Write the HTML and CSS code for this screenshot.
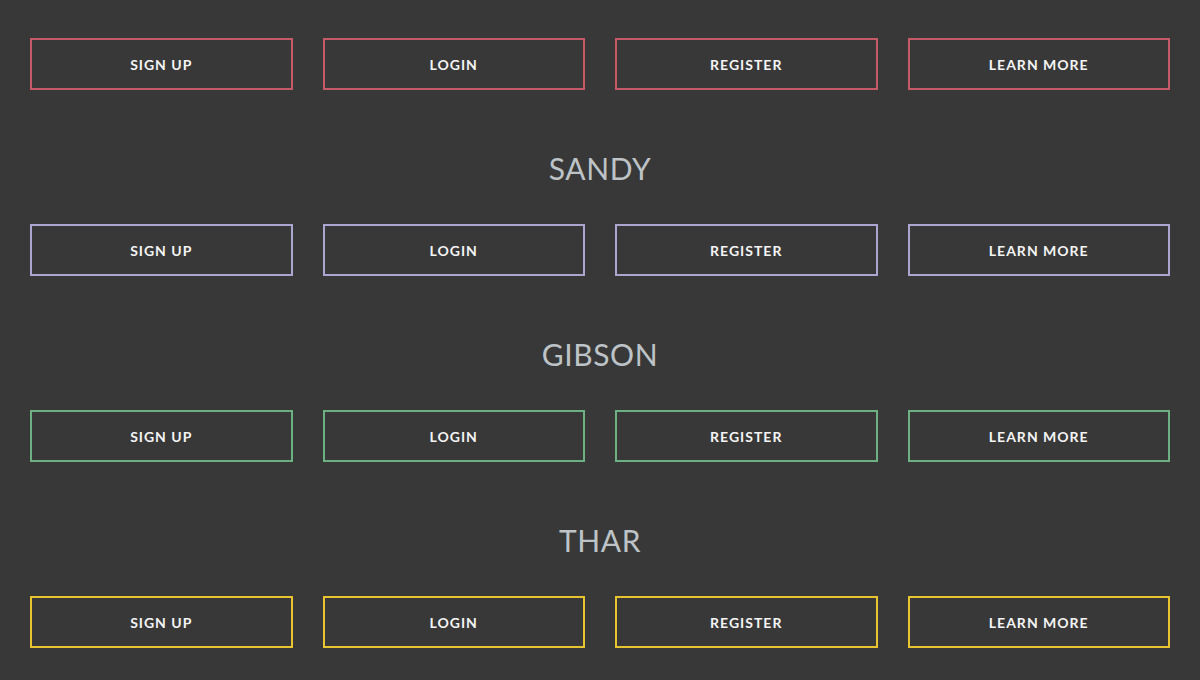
FILE: index.html
```html
<!DOCTYPE html>
<html>
<head>
<meta charset="utf-8">
<link rel="stylesheet" href="styles.css">
</head>
<body>
<main class="page">
  <section class="group group-first">
    <div class="row">
      <a class="btn btn-red">Sign up</a>
      <a class="btn btn-red">Login</a>
      <a class="btn btn-red">Register</a>
      <a class="btn btn-red">Learn more</a>
    </div>
  </section>
  <section class="group">
    <h2 class="title">Sandy</h2>
    <div class="row">
      <a class="btn btn-purple">Sign up</a>
      <a class="btn btn-purple">Login</a>
      <a class="btn btn-purple">Register</a>
      <a class="btn btn-purple">Learn more</a>
    </div>
  </section>
  <section class="group">
    <h2 class="title">Gibson</h2>
    <div class="row">
      <a class="btn btn-green">Sign up</a>
      <a class="btn btn-green">Login</a>
      <a class="btn btn-green">Register</a>
      <a class="btn btn-green">Learn more</a>
    </div>
  </section>
  <section class="group">
    <h2 class="title">Thar</h2>
    <div class="row">
      <a class="btn btn-yellow">Sign up</a>
      <a class="btn btn-yellow">Login</a>
      <a class="btn btn-yellow">Register</a>
      <a class="btn btn-yellow">Learn more</a>
    </div>
  </section>
</main>
</body>
</html>
```

FILE: styles.css
```css
* { box-sizing: border-box; }
html, body {
  margin: 0;
  padding: 0;
  background: #383838;
  height: 100%;
  overflow: hidden;
}
body {
  font-family: Lato, "Open Sans", sans-serif;
}
.page {
  padding: 38px 30px 0;
}
.group {
  display: flex;
  flex-direction: column;
}
.title {
  margin: 60px 0 38px;
  height: 36px;
  line-height: 36px;
  text-align: center;
  font-size: 30px;
  font-weight: 400;
  color: #bdc3c7;
  text-transform: uppercase;
  letter-spacing: 0.6px;
}
.row {
  display: flex;
  gap: 30px;
}
.btn {
  flex: 1;
  height: 52px;
  border: 2px solid;
  display: flex;
  align-items: center;
  justify-content: center;
  color: #f4f4f4;
  font-size: 14px;
  font-weight: 700;
  letter-spacing: 1px;
  text-transform: uppercase;
}
.btn-red { border-color: #c65a66; }
.btn-purple { border-color: #aba6cf; }
.btn-green { border-color: #6db182; }
.btn-yellow { border-color: #e8c431; }
```
